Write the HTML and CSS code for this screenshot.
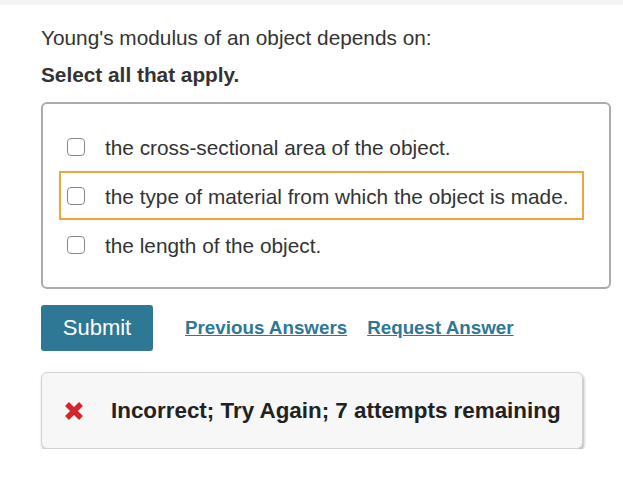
FILE: index.html
```html
<!DOCTYPE html>
<html lang="en">
<head>
    <meta charset="UTF-8">
    <title>Question</title>
    <link rel="stylesheet" href="styles.css">
</head>
<body>
    <div class="topbar"></div>
    <div class="content">
        <p class="question">Young's modulus of an object depends on:</p>
        <p class="instruction">Select all that apply.</p>

        <div class="choices">
            <label class="choice">
                <span class="box"></span>
                <span class="choice-text">the cross-sectional area of the object.</span>
            </label>
            <label class="choice focused">
                <span class="box"></span>
                <span class="choice-text">the type of material from which the object is made.</span>
            </label>
            <label class="choice">
                <span class="box"></span>
                <span class="choice-text">the length of the object.</span>
            </label>
        </div>

        <div class="actions">
            <button class="submit">Submit</button>
            <a class="link" href="#">Previous Answers</a>
            <a class="link" href="#">Request Answer</a>
        </div>

        <div class="feedback">
            <svg class="x-icon" width="20" height="20" viewBox="0 0 20 20">
                <path d="M3 3 L17 17 M17 3 L3 17" stroke="#d3262e" stroke-width="5.5" />
            </svg>
            <span class="feedback-text">Incorrect; Try Again; 7 attempts remaining</span>
        </div>
    </div>
</body>
</html>
```

FILE: styles.css
```css
body {
    margin: 0;
    font-family: "Liberation Sans", Arial, sans-serif;
    color: #333;
    background: #fff;
}
.topbar {
    height: 5px;
    background: #f4f4f4;
}
.content {
    padding-left: 41px;
}
.question {
    margin: 21px 0 0;
    font-size: 20.8px;
    line-height: 24px;
}
.instruction {
    margin: 13px 0 0;
    font-size: 20.8px;
    line-height: 24px;
    font-weight: bold;
}
.choices {
    width: 566px;
    margin-top: 15px;
    padding: 18px 0;
    border: 2px solid #ababab;
    border-radius: 6px;
}
.choice {
    display: flex;
    align-items: center;
    width: fit-content;
    height: 45px;
    margin-left: 16px;
    padding: 0 13px 0 6px;
    border: 2px solid transparent;
}
.focused {
    border-color: #f1a43c;
}
.box {
    flex: none;
    width: 16px;
    height: 16px;
    border: 1.5px solid #888;
    border-radius: 4px;
    background: #fff;
    margin-right: 20px;
}
.choice-text {
    padding-top: 2px;
    font-size: 20.8px;
}
.actions {
    display: flex;
    align-items: center;
    margin-top: 16px;
}
.submit {
    width: 112px;
    height: 46px;
    border: none;
    border-radius: 3px;
    background: #2e7896;
    color: #fff;
    font-family: inherit;
    font-size: 22px;
}
.link {
    margin-left: 32px;
    color: #2e7896;
    font-size: 18.8px;
    font-weight: bold;
}
.link + .link {
    margin-left: 20px;
}
.feedback {
    display: flex;
    align-items: center;
    width: 540px;
    height: 75px;
    margin-top: 21px;
    border: 1px solid #d2d2d2;
    border-radius: 6px;
    background: #f7f7f7;
    box-shadow: 1px 2px 3px rgba(0, 0, 0, 0.3);
}
.x-icon {
    margin-left: 22px;
    margin-right: 27px;
}
.feedback-text {
    font-size: 22.4px;
    font-weight: bold;
    color: #222;
}
```
